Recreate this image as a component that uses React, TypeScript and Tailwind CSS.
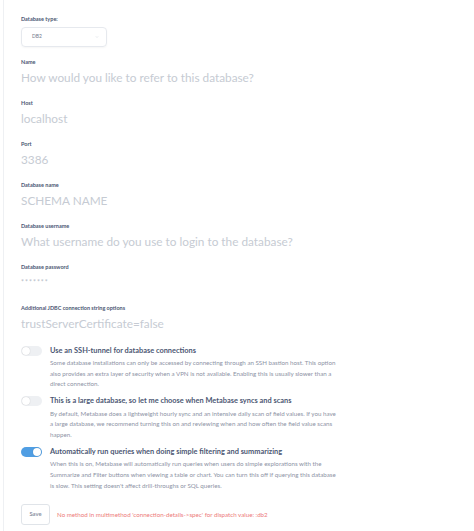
import { ChevronDown } from "lucide-react";

interface FieldProps {
  label: string;
  value: string;
  small?: boolean;
}

function Field({ label, value, small = false }: FieldProps) {
  return (
    <div className="mb-[15px]">
      <div className="text-[5.5px] leading-[7px] font-bold text-[#4c5773] mb-[4px]">{label}</div>
      {small ? (
        <div className="text-[7px] leading-[15px] text-[#b8bec9] tracking-[1px]">{value}</div>
      ) : (
        <div className="text-[11.8px] leading-[15px] text-[#c6cbd3]">{value}</div>
      )}
    </div>
  );
}

interface ToggleRowProps {
  title: string;
  lines: string[];
  on?: boolean;
}

function ToggleRow({ title, lines, on = false }: ToggleRowProps) {
  return (
    <div className="flex items-start mb-[6px]">
      <div
        className={
          on
            ? "w-[21px] h-[10px] rounded-full bg-[#509ee3] flex items-center justify-end px-[1px] shrink-0"
            : "w-[21px] h-[10px] rounded-full bg-[#eef0f3] flex items-center justify-start px-[1px] shrink-0"
        }
      >
        <div className="w-[8px] h-[8px] rounded-full bg-white shadow-[0_0_1px_rgba(0,0,0,0.25)]" />
      </div>
      <div className="ml-[8px]">
        <div className="text-[7.4px] leading-[10px] font-bold text-[#4c5773]">{title}</div>
        <div className="mt-[2.5px] text-[6.2px] leading-[10.7px] text-[#8d93a5]">
          {lines.map((line) => (
            <div key={line} className="whitespace-nowrap">{line}</div>
          ))}
        </div>
      </div>
    </div>
  );
}

export default function App() {
  return (
    <div className="w-[474px] h-[531px] bg-white font-['Lato',sans-serif] flex">
      <div className="ml-[3px] w-px bg-[#eef0f3]" />
      <div className="pl-[17px] pt-[15.5px] flex-1">
        {/* Database type */}
        <div className="mb-[11.5px]">
          <div className="text-[5.5px] leading-[7px] font-bold text-[#4c5773] mb-[4.5px]">Database type:</div>
          <div className="w-[86px] h-[20px] border border-[#e6e9ee] rounded-[4px] shadow-[0_1px_2px_rgba(0,0,0,0.04)] flex items-center justify-between pl-[10px] pr-[7px]">
            <span className="text-[5px] text-[#727a8c]">DB2</span>
            <ChevronDown className="w-[4px] h-[4px] text-[#c0c5cd]" strokeWidth={2} />
          </div>
        </div>

        <Field label="Name" value="How would you like to refer to this database?" />
        <Field label="Host" value="localhost" />
        <Field label="Port" value="3386" />
        <Field label="Database name" value="SCHEMA NAME" />
        <Field label="Database username" value="What username do you use to login to the database?" />
        <Field label="Database password" value="*******" small />
        <Field label="Additional JDBC connection string options" value="trustServerCertificate=false" />

        <div className="mt-[3px]">
          <ToggleRow
            title="Use an SSH-tunnel for database connections"
            lines={[
              "Some database installations can only be accessed by connecting through an SSH bastion host. This option",
              "also provides an extra layer of security when a VPN is not available. Enabling this is usually slower than a",
              "direct connection.",
            ]}
          />
          <ToggleRow
            title="This is a large database, so let me choose when Metabase syncs and scans"
            lines={[
              "By default, Metabase does a lightweight hourly sync and an intensive daily scan of field values. If you have",
              "a large database, we recommend turning this on and reviewing when and how often the field value scans",
              "happen.",
            ]}
          />
          <ToggleRow
            on
            title="Automatically run queries when doing simple filtering and summarizing"
            lines={[
              "When this is on, Metabase will automatically run queries when users do simple explorations with the",
              "Summarize and Filter buttons when viewing a table or chart. You can turn this off if querying this database",
              "is slow. This setting doesn't affect drill-throughs or SQL queries.",
            ]}
          />
        </div>

        <div className="flex items-center mt-[12.5px]">
          <div className="w-[29px] h-[21px] border border-[#e0e4e9] rounded-[3px] flex items-center justify-center text-[5.8px] font-bold text-[#8d93a5]">
            Save
          </div>
          <div className="ml-[7px] text-[6.2px] text-[#ed7a7a]">
            No method in multimethod 'connection-details-&gt;spec' for dispatch value: :db2
          </div>
        </div>
      </div>
    </div>
  );
}
